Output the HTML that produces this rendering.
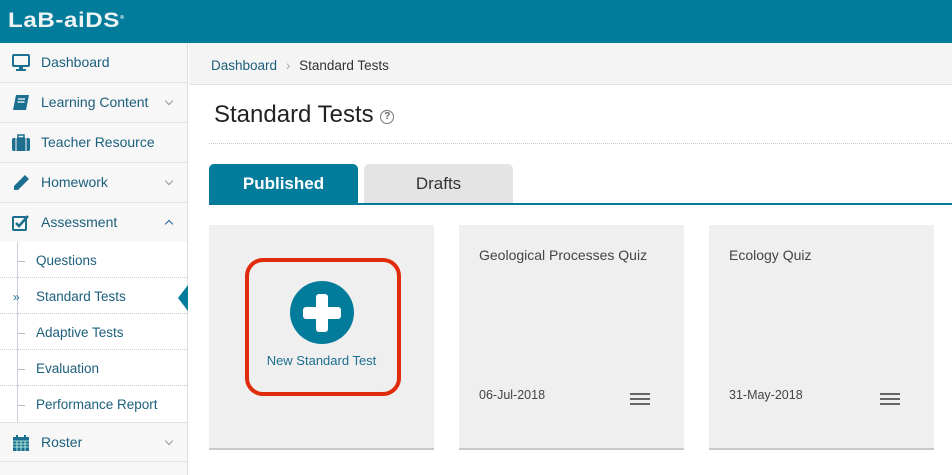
<!DOCTYPE html>
<html><head><style>
*{box-sizing:border-box;margin:0;padding:0}
body{width:952px;height:475px;overflow:hidden;font-family:"Liberation Sans",sans-serif;background:#fff;position:relative}
.hdr{position:absolute;left:0;top:0;width:952px;height:43px;background:#037c9c}
.logo{position:absolute;left:8px;top:9px;color:#eef3f3;font-weight:bold;font-size:21px;letter-spacing:0.5px;transform:scaleX(1.15);transform-origin:left}
.side{position:absolute;left:0;top:43px;width:188px;height:432px;background:#f7f7f7;border-right:1px solid #ddd}
.it{position:absolute;left:0;width:187px;height:40px;border-bottom:1px solid #e2e2e2;color:#1c5f7c;font-size:14px;line-height:38px;padding-left:41px}
.ic{position:absolute;left:12px;top:11px;width:18px;height:17px}
.chev{position:absolute;right:15px;top:15px;width:6px;height:6px;border-right:1.3px solid #999;border-bottom:1.3px solid #999;transform:rotate(45deg)}
.sub{position:absolute;left:0;width:187px;background:#fff;top:199px;height:181px}
.si{position:absolute;left:0;width:187px;height:36px;border-bottom:1px dotted #ccc;color:#1c5f7c;font-size:13.5px;line-height:38px;padding-left:36px}
.si.d:after{content:"";position:absolute;left:18px;top:19px;width:7px;border-top:1px solid #bbb}
.vl{position:absolute;left:17px;top:0;height:180px;border-left:1px solid #ccd}
.bc{position:absolute;left:189px;top:43px;width:763px;height:42px;background:#f4f4f4;border-bottom:1px solid #e0e0e0;font-size:13.5px;line-height:46px;padding-left:22px;color:#333}
.title{position:absolute;left:214px;top:101px;font-size:24px;color:#222}
.tab{position:absolute;top:164px;height:40px;width:149px;border-radius:5px 5px 0 0;text-align:center;line-height:40px;font-size:17px}
.card{position:absolute;top:225px;width:225px;height:225px;background:#efefef;border-bottom:2px solid #c8c8c8}
.ct{position:absolute;left:20px;top:22px;font-size:14px;color:#444}
.cd{position:absolute;left:20px;top:163px;font-size:12.5px;color:#444}
.hm{position:absolute;left:171px;top:168px;width:20px;height:12px;border-top:2px solid #666;border-bottom:2px solid #666}
.hm:after{content:"";position:absolute;left:0;top:3px;width:20px;border-top:2px solid #666}
</style></head><body>
<div class="hdr"><div class="logo">LaB-aiDS<sup style="font-size:5px">®</sup></div></div>
<div class="side">
 <div class="it" style="top:0"><svg class="ic" viewBox="0 0 18 17"><rect x="1" y="1" width="16" height="11" rx="1" fill="none" stroke="#1c6f8f" stroke-width="2"/><rect x="7" y="12" width="4" height="3" fill="#1c6f8f"/><rect x="4" y="15" width="10" height="2" fill="#1c6f8f"/></svg>Dashboard</div>
 <div class="it" style="top:40px"><svg class="ic" viewBox="0 0 18 17"><path d="M4 1h13l-3 15H1z" fill="#1c6f8f"/><path d="M6 5h7M5.5 8h7" stroke="#fff" stroke-width="1.2"/></svg>Learning Content<div class="chev"></div></div>
 <div class="it" style="top:80px"><svg class="ic" viewBox="0 0 18 17"><rect x="0" y="4" width="18" height="13" rx="2" fill="#1c6f8f"/><rect x="6" y="1" width="6" height="3" fill="none" stroke="#1c6f8f" stroke-width="1.5"/><path d="M4 4v13M14 4v13" stroke="#f7f7f7" stroke-width="1"/></svg>Teacher Resource</div>
 <div class="it" style="top:120px"><svg class="ic" viewBox="0 0 18 17"><path d="M13 1l4 4L6 16H2v-4z" fill="#1c6f8f"/></svg>Homework<div class="chev"></div></div>
 <div class="it" style="top:160px"><svg class="ic" viewBox="0 0 18 17"><rect x="1" y="3" width="13" height="13" rx="1" fill="none" stroke="#1c6f8f" stroke-width="2"/><path d="M4 9l3 3 9-10" fill="none" stroke="#1c6f8f" stroke-width="2.5"/></svg>Assessment<div class="chev" style="transform:rotate(-135deg);top:18px;border-color:#1c5f9c"></div></div>
 <div class="sub"><div class="vl"></div>
  <div class="si d" style="top:0">Questions</div>
  <div class="si" style="top:36px"><span style="position:absolute;left:13px;top:0;color:#1c6f8f;font-size:12px">»</span>Standard Tests</div>
  <div class="si d" style="top:72px">Adaptive Tests</div>
  <div class="si d" style="top:108px">Evaluation</div>
  <div class="si d" style="top:144px;border-bottom:none">Performance Report</div>
 </div>
 <div style="position:absolute;left:178px;top:242px;width:0;height:0;border-top:13px solid transparent;border-bottom:13px solid transparent;border-right:10px solid #037c9c"></div>
 <div class="it" style="top:379px;border-top:1px solid #e2e2e2"><svg class="ic" viewBox="0 0 18 17"><rect x="1" y="3" width="16" height="14" fill="#1c6f8f"/><path d="M1 7h16M5 7v10M9 7v10M13 7v10M1 10h16M1 13h16" stroke="#cfe" stroke-width="0.8"/><path d="M5 1v4M13 1v4" stroke="#1c6f8f" stroke-width="2"/></svg>Roster<div class="chev"></div></div>
</div>
<div class="bc"><span style="color:#1c5f7c">Dashboard</span> <span style="color:#aaa;margin:0 5px">›</span> Standard Tests</div>
<div class="title">Standard Tests <span style="display:inline-block;width:14px;height:14px;border:1.5px solid #777;border-radius:50%;font-size:10px;line-height:11px;text-align:center;vertical-align:3px;color:#666;font-weight:bold">?</span></div>
<div style="position:absolute;left:209px;top:143px;width:743px;border-top:1px dotted #ccc"></div>
<div class="tab" style="left:209px;background:#037c9c;color:#fff;font-weight:bold">Published</div>
<div class="tab" style="left:364px;background:#e4e4e4;color:#333">Drafts</div>
<div style="position:absolute;left:209px;top:203px;width:743px;border-top:2px solid #037c9c"></div>
<div class="card" style="left:209px">
 <div style="position:absolute;left:36px;top:33px;width:156px;height:138px;border:4px solid #e02b0c;border-radius:18px"></div>
 <div style="position:absolute;left:81px;top:56px;width:64px;height:63px;border-radius:50%;background:#037c9c"></div>
 <div style="position:absolute;left:107px;top:69px;width:12px;height:38px;background:#fff;border-radius:3px"></div>
 <div style="position:absolute;left:94px;top:82px;width:38px;height:12px;background:#fff;border-radius:3px"></div>
 <div style="position:absolute;left:0;width:225px;top:128px;text-align:center;font-size:13px;color:#1c6f8f">New Standard Test</div>
</div>
<div class="card" style="left:459px"><div class="ct">Geological Processes Quiz</div><div class="cd">06-Jul-2018</div><div class="hm"></div></div>
<div class="card" style="left:709px"><div class="ct">Ecology Quiz</div><div class="cd">31-May-2018</div><div class="hm"></div></div>
</body></html>
